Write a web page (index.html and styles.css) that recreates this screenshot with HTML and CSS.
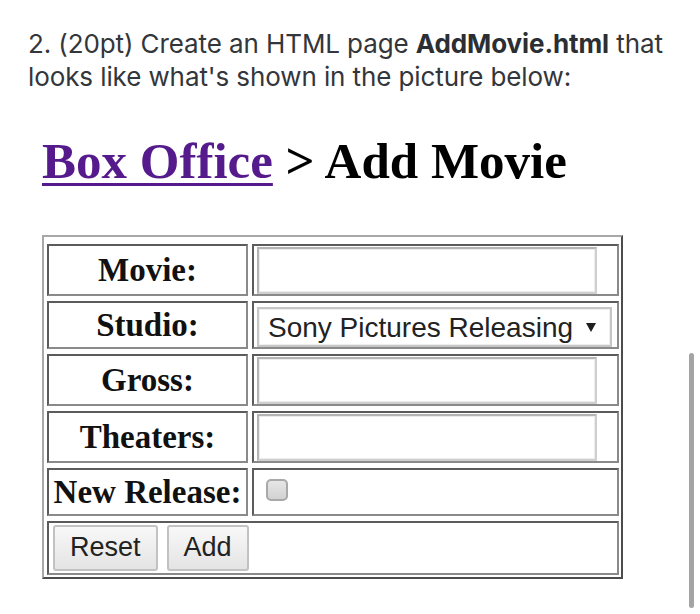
FILE: index.html
```html
<!DOCTYPE html>
<html>
<head>
<meta charset="utf-8">
<title>AddMovie</title>
<link rel="stylesheet" href="styles.css">
</head>
<body>
<div class="page">
  <p class="intro">2. (20pt) Create an HTML page <b>AddMovie.html</b> that looks like what's shown in the picture below:</p>
  <h1 class="title"><a href="#" class="crumb">Box Office</a> &gt; Add Movie</h1>
  <form class="movie-form">
    <div class="cell label">Movie:</div>
    <div class="cell field"><input class="text-input" type="text"></div>
    <div class="cell label">Studio:</div>
    <div class="cell field">
      <div class="select-wrap">
        <select class="select">
          <option>Sony Pictures Releasing</option>
        </select>
      </div>
    </div>
    <div class="cell label">Gross:</div>
    <div class="cell field"><input class="text-input" type="text"></div>
    <div class="cell label">Theaters:</div>
    <div class="cell field"><input class="text-input" type="text"></div>
    <div class="cell label">New Release:</div>
    <div class="cell field"><input class="check" type="checkbox"></div>
    <div class="cell actions">
      <button class="btn" type="reset">Reset</button>
      <button class="btn" type="button">Add</button>
    </div>
  </form>
</div>
<div class="scroll-indicator"></div>
</body>
</html>
```
FILE: styles.css
```css
html, body {
  margin: 0;
  padding: 0;
  background: #ffffff;
}

.page {
  width: 700px;
  height: 614px;
  overflow: hidden;
}

.intro {
  margin: 0;
  padding: 27px 0 0 28px;
  font-family: "Inter", "Roboto", sans-serif;
  font-size: 26px;
  line-height: 33px;
  color: #33363a;
  width: 652px;
  letter-spacing: -0.1px;
}

.intro b {
  font-weight: 700;
  color: #2b2e33;
}

.title {
  margin: 40px 0 0 0;
  padding-left: 42px;
  font-family: "Liberation Serif", serif;
  font-weight: 700;
  font-size: 51px;
  line-height: 56px;
  color: #000000;
}

.crumb {
  color: #551a8b;
  text-decoration: underline;
  text-decoration-thickness: 3px;
  text-underline-offset: 5px;
}

.movie-form {
  margin: 46px 0 0 42px;
  width: 581px;
  box-sizing: border-box;
  border: 2px solid;
  border-color: #a8a8a8 #4c4c4c #4c4c4c #a8a8a8;
  padding: 7px 2px 2px 3px;
  display: grid;
  grid-template-columns: 201px 367px;
  grid-template-rows: 52px 48px 52px 52px 48px 54px;
  column-gap: 4px;
  row-gap: 5px;
}

.cell {
  box-sizing: border-box;
  border: 2px solid;
  border-color: #5b5b5b #8a8a8a #8a8a8a #5b5b5b;
  display: flex;
  align-items: center;
}

.label {
  justify-content: center;
  font-family: "Liberation Serif", serif;
  font-weight: 700;
  font-size: 33px;
  color: #111111;
  white-space: nowrap;
}

.field {
  padding-left: 3px;
}

.text-input {
  box-sizing: border-box;
  width: 340px;
  height: 47px;
  margin: 1px 0 0 0;
  border: 2px solid;
  border-color: #b4b4b4 #cfcfcf #cfcfcf #b4b4b4;
  box-shadow: inset 0 0 0 1px #ececec;
  background: #ffffff;
  padding: 0;
}

.select-wrap {
  position: relative;
  width: 355px;
  height: 40px;
  margin-top: 4px;
}

.select {
  -webkit-appearance: none;
  appearance: none;
  box-sizing: border-box;
  width: 355px;
  height: 40px;
  border: 2px solid #c6c6c6;
  box-shadow: inset 0 0 0 1px #efefef;
  border-radius: 0;
  background: #ffffff;
  padding: 0 0 0 9px;
  font-family: "Liberation Sans", Arial, sans-serif;
  font-size: 28px;
  color: #222222;
}

.select-wrap::after {
  content: "";
  position: absolute;
  right: 16px;
  top: 16px;
  width: 0;
  height: 0;
  border-left: 5px solid transparent;
  border-right: 5px solid transparent;
  border-top: 9px solid #1e1e1e;
  pointer-events: none;
}

.check {
  -webkit-appearance: none;
  appearance: none;
  box-sizing: border-box;
  width: 22px;
  height: 22px;
  margin: 0 0 4px 9px;
  border: 2px solid #a9a9a9;
  border-radius: 5px;
  background: linear-gradient(#e6e6e6, #d2d2d2);
}

.actions {
  grid-column: 1 / 3;
  padding-left: 4px;
  gap: 9px;
}

.btn {
  box-sizing: border-box;
  height: 46px;
  margin-top: -1px;
  padding: 0 15px;
  border: 2px solid #c2c2c2;
  border-radius: 3px;
  background: linear-gradient(#f8f8f8, #e4e4e4);
  font-family: "Liberation Sans", Arial, sans-serif;
  font-size: 27px;
  color: #222222;
}

.scroll-indicator {
  position: absolute;
  left: 689px;
  top: 353px;
  width: 5px;
  height: 255px;
  border-radius: 3px;
  background: #a4a4a4;
}
```
